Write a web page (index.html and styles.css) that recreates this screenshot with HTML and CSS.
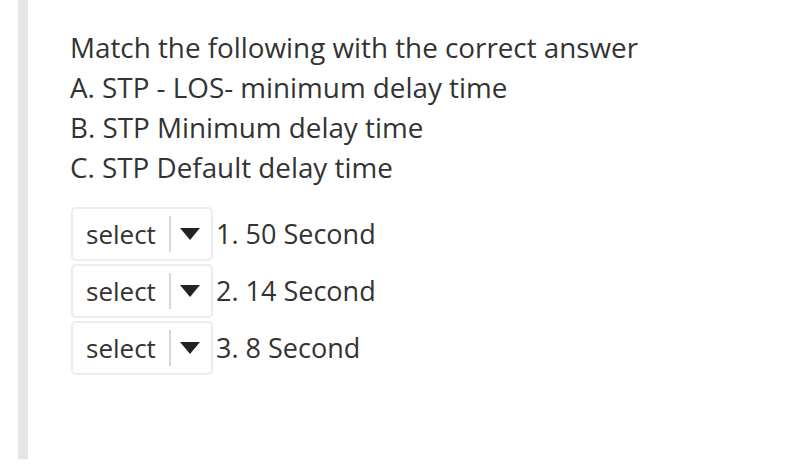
FILE: index.html
```html
<!DOCTYPE html>
<html lang="en">
<head>
  <meta charset="UTF-8" />
  <title>Match the following</title>
  <link rel="stylesheet" href="styles.css">
</head>
<body>
  <div class="question">
    <div class="prompt">
      <div>Match the following with the correct answer</div>
      <div>A. STP - LOS- minimum delay time</div>
      <div>B. STP Minimum delay time</div>
      <div>C. STP Default delay time</div>
    </div>
    <div class="answers">
      <div class="row">
        <div class="dropdown"><span class="value">select</span><span class="sep"></span><span class="caret"></span></div>
        <span class="option">1. 50 Second</span>
      </div>
      <div class="row">
        <div class="dropdown"><span class="value">select</span><span class="sep"></span><span class="caret"></span></div>
        <span class="option">2. 14 Second</span>
      </div>
      <div class="row">
        <div class="dropdown"><span class="value">select</span><span class="sep"></span><span class="caret"></span></div>
        <span class="option">3. 8 Second</span>
      </div>
    </div>
  </div>
</body>
</html>
```

FILE: styles.css
```css
body { margin: 0; background-color: #fff; font-family: "Open Sans", "Noto Sans", sans-serif; color: #333; }
.question { margin-left: 18px; border-left: 10px solid #e4e5e7; height: 432px; padding: 27px 0 0 42px; }
.prompt { font-size: 27.8px; line-height: 40px; }
.answers { margin-top: 20px; display: flex; flex-direction: column; gap: 3px; font-size: 26px; line-height: 40px; }
.row { display: flex; align-items: center; gap: 3px; }
.dropdown { box-sizing: border-box; width: 142px; height: 54px; margin-left: 1px; border: 2px solid #ececec; border-radius: 5px; display: flex; align-items: center; padding-left: 13px; }
.value { width: 70px; }
.sep { width: 2px; height: 36px; background-color: #d6d6d6; margin-left: 13px; }
.caret { width: 0; height: 0; margin-left: 9px; border-left: 10px solid transparent; border-right: 10px solid transparent; border-top: 12px solid #222; }
.option { font-size: 27px; }
```
